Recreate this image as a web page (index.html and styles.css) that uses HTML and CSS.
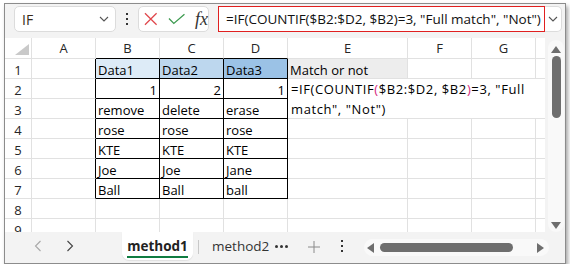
FILE: index.html
```html
<!DOCTYPE html>
<html>
<head>
<meta charset="utf-8">
<link rel="stylesheet" href="styles.css">
</head>
<body>
<div class="window">
  <div class="fbar">
    <div class="namebox">
      <span class="nb-text">IF</span>
      <svg class="chev" width="10" height="6" viewBox="0 0 10 6"><path d="M1 1 L5 5 L9 1" fill="none" stroke="#555" stroke-width="1.1"/></svg>
    </div>
    <div class="vdots"><i></i><i></i><i></i></div>
    <div class="fxbox">
      <svg width="14" height="14" viewBox="0 0 14 14"><path d="M1 1 L13 13 M13 1 L1 13" stroke="#e0474c" stroke-width="1.3" fill="none"/></svg>
      <svg width="18" height="12" viewBox="0 0 18 12"><path d="M1 5.5 L6 10.5 L17 1" stroke="#3c9a4f" stroke-width="1.3" fill="none"/></svg>
      <span class="fx">fx</span>
    </div>
    <div class="formula">
      <div class="finput">=IF(COUNTIF($B2:$D2, $B2)=3, "Full match", "Not")</div>
      <svg class="chev2" width="10" height="6" viewBox="0 0 10 6"><path d="M1 1 L5 5 L9 1" fill="none" stroke="#555" stroke-width="1.1"/></svg>
    </div>
  </div>
  <div class="gridarea">
    <div class="sheet">
      <div class="c corner"><svg width="14" height="11" viewBox="0 0 14 11"><path d="M14 0 L14 11 L0 11 Z" fill="#c9c9c9"/></svg></div>
      <div class="c ch">A</div><div class="c ch bb">B</div><div class="c ch bb">C</div><div class="c ch bb">D</div><div class="c ch">E</div><div class="c ch">F</div><div class="c ch">G</div><div class="c ch last"></div>

      <div class="c rh">1</div><div class="c ba"></div><div class="c bd f1">Data1</div><div class="c bd f2">Data2</div><div class="c bd f3">Data3</div><div class="c e1">Match or not</div><div class="c"></div><div class="c"></div><div class="c last"></div>

      <div class="edit">=IF(COUNTIF<span class="pk">(</span>$B2:$D2, $B2<span class="pk">)</span>=3, "Full<br>match", "Not")</div>

      <div class="c rh">2</div><div class="c ba"></div><div class="c bd num">1</div><div class="c bd num">2</div><div class="c bd num">1</div>
      <div class="c rh">3</div><div class="c ba"></div><div class="c bd">remove</div><div class="c bd">delete</div><div class="c bd">erase</div>

      <div class="c rh">4</div><div class="c ba"></div><div class="c bd">rose</div><div class="c bd">rose</div><div class="c bd">rose</div><div class="c"></div><div class="c"></div><div class="c"></div><div class="c last"></div>
      <div class="c rh">5</div><div class="c ba"></div><div class="c bd">KTE</div><div class="c bd">KTE</div><div class="c bd">KTE</div><div class="c"></div><div class="c"></div><div class="c"></div><div class="c last"></div>
      <div class="c rh">6</div><div class="c ba"></div><div class="c bd">Joe</div><div class="c bd">Joe</div><div class="c bd">Jane</div><div class="c"></div><div class="c"></div><div class="c"></div><div class="c last"></div>
      <div class="c rh">7</div><div class="c ba"></div><div class="c bd">Ball</div><div class="c bd">Ball</div><div class="c bd">ball</div><div class="c"></div><div class="c"></div><div class="c"></div><div class="c last"></div>
      <div class="c rh">8</div><div class="c"></div><div class="c"></div><div class="c"></div><div class="c"></div><div class="c"></div><div class="c"></div><div class="c"></div><div class="c last"></div>
      <div class="c rh">9</div><div class="c"></div><div class="c"></div><div class="c"></div><div class="c"></div><div class="c"></div><div class="c"></div><div class="c"></div><div class="c last"></div>
    </div>
    <div class="vscroll">
      <div class="vtrack">
        <svg width="10" height="7" viewBox="0 0 10 7"><path d="M5 0 L10 7 L0 7 Z" fill="#6e6e6e"/></svg>
        <div class="vthumb"></div>
        <div class="spacer"></div>
        <svg width="10" height="7" viewBox="0 0 10 7"><path d="M0 0 L10 0 L5 7 Z" fill="#6e6e6e"/></svg>
      </div>
    </div>
  </div>
  <div class="tabbar">
    <div class="navs">
      <svg width="8" height="12" viewBox="0 0 8 12"><path d="M6.5 1 L1.5 6 L6.5 11" fill="none" stroke="#a8a8a8" stroke-width="1.1"/></svg>
      <svg width="8" height="12" viewBox="0 0 8 12"><path d="M1.5 1 L6.5 6 L1.5 11" fill="none" stroke="#444" stroke-width="1.1"/></svg>
    </div>
    <div class="tab active"><span>method1</span></div>
    <div class="sep"></div>
    <div class="tab">method2</div>
    <div class="more"><i></i><i></i><i></i></div>
    <svg class="plus" width="12" height="12" viewBox="0 0 12 12"><path d="M6 0 V12 M0 6 H12" stroke="#8a8a8a" stroke-width="1"/></svg>
    <div class="vdots small"><i></i><i></i><i></i></div>
    <div class="htrack">
      <svg width="7" height="10" viewBox="0 0 7 10"><path d="M7 0 L7 10 L0 5 Z" fill="#6e6e6e"/></svg>
      <div class="hthumb"></div>
      <div class="spacer"></div>
      <svg width="7" height="10" viewBox="0 0 7 10"><path d="M0 0 L7 5 L0 10 Z" fill="#6e6e6e"/></svg>
    </div>
  </div>
</div>
</body>
</html>
```

FILE: styles.css
```css
* { box-sizing: border-box; }
body { margin: 0; background: #fff; font-family: "Open Sans", "Liberation Sans", sans-serif; }
.window {
  margin: 3px 0 0 4px;
  width: 562px;
  height: 261px;
  border: 1px solid #8c8c8c;
  background: #f3f3f3;
  box-shadow: 2px 3px 4px rgba(0,0,0,0.35);
  display: flex;
  flex-direction: column;
  overflow: hidden;
}
.fbar {
  height: 34px;
  flex: none;
  display: flex;
  align-items: flex-start;
  padding: 2px 0 0 9px;
}
.namebox {
  width: 102px; height: 26px;
  background: #fff;
  border: 1px solid #dcdcdc;
  border-radius: 5px;
  display: flex; align-items: center;
  padding: 0 6px 0 7px;
}
.nb-text { font-size: 14px; color: #3a2a1a; flex: 1; }
.vdots { width: 22px; height: 26px; display: flex; flex-direction: column; align-items: center; justify-content: center; gap: 3px; }
.vdots i { width: 2px; height: 2px; background: #333; display: block; }
.fxbox {
  width: 71px; height: 26px;
  background: #fff;
  border: 1px solid #dcdcdc;
  border-radius: 5px;
  display: flex; align-items: center;
  padding: 0 0 0 5px;
  gap: 10px;
}
.fx { font-family: "Liberation Serif", serif; font-style: italic; font-size: 18px; color: #333; line-height: 1; }
.formula {
  margin-left: 9px;
  width: 344px; height: 26px;
  background: #fff;
  border: 1px solid #dcdcdc;
  border-left: none;
  border-radius: 0 5px 5px 0;
  display: flex; align-items: center;
}
.finput {
  width: 327px; height: 26px;
  border: 1px solid #e02020;
  margin-top: -1px; margin-bottom: -1px;
  font-size: 13.5px;
  color: #111;
  padding: 0 0 0 7px;
  display: flex; align-items: center;
  white-space: nowrap; overflow: hidden;
}
.chev2 { margin-left: 3px; }
.gridarea { height: 194px; flex: none; display: flex; }
.sheet {
  width: 540px; height: 194px; overflow: hidden;
  display: grid;
  grid-template-columns: 27px 64px 64px 64px 64px 120px 64px 64px 9px;
  grid-template-rows: 21px repeat(9, 20px);
  background: #fff;
}
.c {
  border-right: 1px solid #e1e1e1;
  border-bottom: 1px solid #e1e1e1;
  font-size: 13px;
  color: #000;
  padding: 2px 2px 0 2px;
  display: flex; align-items: center;
  white-space: nowrap; overflow: hidden;
}
.c.last { border-right: none; }
.corner { align-items: flex-end; justify-content: flex-end; padding: 0 2px 3px 0; }
.ch { justify-content: center; color: #262626; padding: 0; }
.rh { justify-content: center; color: #262626; padding: 3px 0 0 0; }
.bb { border-bottom-color: #000; }
.ba { border-right-color: #000; }
.bd { border-right-color: #000; border-bottom-color: #000; }
.num { justify-content: flex-end; }
.f1 { background: #ddebf7; }
.f2 { background: #bdd7ee; }
.f3 { background: #9bc2e6; }
.e1 { background: #ededed; }
.edit {
  grid-column: 6 / 10;
  grid-row: 3 / 5;
  background: #fff;
  border-bottom: 1px solid #e1e1e1;
  font-size: 13px;
  letter-spacing: 0.6px;
  line-height: 20px;
  padding: 0 0 0 3px;
  color: #000;
  white-space: nowrap;
}
.pk { color: #d6287e; }
.vscroll { flex: 1; padding: 2px 1px 0 3px; }
.vtrack {
  height: 192px;
  background: #f9f9f9;
  border-radius: 8px;
  display: flex; flex-direction: column; align-items: center;
  padding: 6px 0 3px 0;
}
.vthumb { width: 9px; height: 62px; background: #6e6e6e; border-radius: 5px; margin-top: 3px; }
.spacer { flex: 1; }
.tabbar { flex: 1; display: flex; align-items: flex-start; }
.navs { width: 117px; height: 28px; display: flex; align-items: center; padding-left: 29px; gap: 24px; }
.tab { height: 28px; font-size: 13.5px; color: #333; display: flex; align-items: center; }
.tab.active {
  width: 71px;
  background: #fff;
  border-radius: 0 0 7px 7px;
  justify-content: center;
  font-weight: bold;
  color: #222;
  box-shadow: 0 1px 1px rgba(0,0,0,0.08);
}
.tab.active span { border-bottom: 2px solid #107c41; line-height: 19px; margin-top: 2px; }
.sep { width: 1px; height: 14px; background: #c8c8c8; margin: 8px 13px 0 5px; }
.more { display: flex; gap: 2px; margin: 13px 0 0 6px; }
.more i { width: 3px; height: 3px; background: #333; border-radius: 50%; display: block; }
.plus { margin: 9px 0 0 20px; }
.vdots.small { width: 44px; height: 28px; gap: 3px; }
.htrack {
  margin-top: 7px;
  width: 185px; height: 17px;
  background: #f9f9f9;
  border-radius: 9px;
  display: flex; align-items: center;
  padding: 0 5px 0 3px;
}
.hthumb { width: 133px; height: 9px; background: #6e6e6e; border-radius: 5px; margin-left: 6px; }
```
